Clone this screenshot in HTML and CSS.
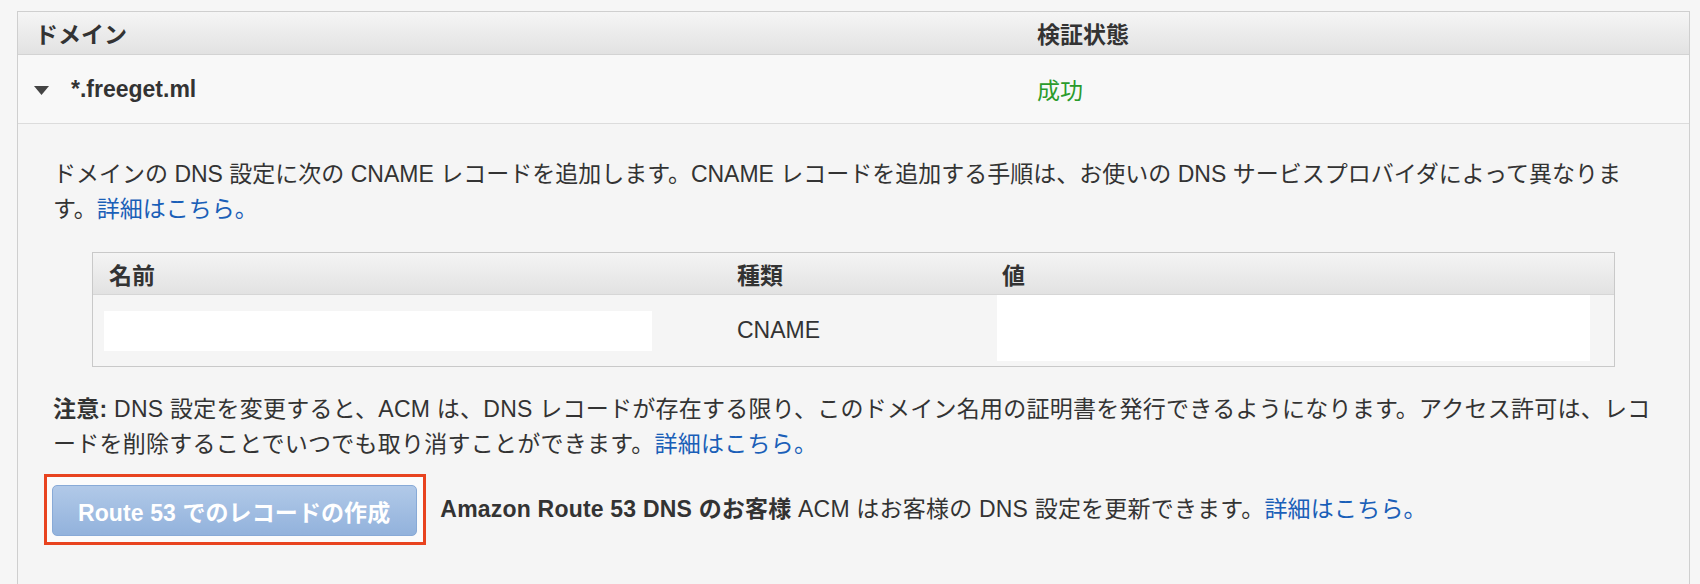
FILE: index.html
```html
<!DOCTYPE html>
<html lang="ja">
<head>
<meta charset="utf-8">
<title>ACM ドメイン検証</title>
<link rel="stylesheet" href="styles.css">
</head>
<body>
<div class="domains">
  <div class="head">
    <div class="cell">ドメイン</div>
    <div class="cell">検証状態</div>
  </div>
  <div class="row">
    <div class="cell domain">
      <svg class="caret" width="15" height="9" viewBox="0 0 15 9"><path d="M0 0H15L7.5 9Z" fill="#444"/></svg>
      <span>*.freeget.ml</span>
    </div>
    <div class="cell status">成功</div>
  </div>
  <div class="detail">
    <p class="para">ドメインの DNS 設定に次の CNAME レコードを追加します。CNAME レコードを追加する手順は、お使いの DNS サービスプロバイダによって異なります。<a class="link" href="#">詳細はこちら。</a></p>
    <div class="records">
      <div class="rhead">
        <div class="rcell">名前</div>
        <div class="rcell">種類</div>
        <div class="rcell">値</div>
      </div>
      <div class="rrow">
        <div class="rcell"><div class="mask mask-name"></div></div>
        <div class="rcell">CNAME</div>
        <div class="rcell top"><div class="mask mask-value"></div></div>
      </div>
    </div>
    <p class="para note"><strong>注意:</strong> DNS 設定を変更すると、ACM は、DNS レコードが存在する限り、このドメイン名用の証明書を発行できるようになります。アクセス許可は、レコードを削除することでいつでも取り消すことができます。<a class="link" href="#">詳細はこちら。</a></p>
    <div class="actions">
      <div class="highlight"><button class="btn" type="button">Route 53 でのレコードの作成</button></div>
      <p class="para action-text"><strong>Amazon Route 53 DNS のお客様</strong> ACM はお客様の DNS 設定を更新できます。<a class="link" href="#">詳細はこちら。</a></p>
    </div>
  </div>
</div>
</body>
</html>
```

FILE: styles.css
```css
html, body {
  margin: 0;
  height: 584px;
  overflow: hidden;
}
body {
  background: #f6f6f6;
  padding: 11px 0 0 17px;
  font-family: "Liberation Sans", "Noto Sans CJK JP", sans-serif;
  font-size: 23px;
  color: #333;
  box-sizing: border-box;
}
.domains {
  width: 1673px;
  box-sizing: border-box;
  border: 1px solid #cfcfcf;
  border-bottom: none;
  background: #f7f7f7;
  min-height: 700px;
}
.head, .row {
  display: grid;
  grid-template-columns: 1000px 1fr;
}
.head {
  height: 42px;
  border-bottom: 1px solid #d3d3d3;
  background: linear-gradient(#f5f5f5, #e2e2e2);
  font-weight: bold;
  color: #333;
}
.cell {
  display: flex;
  align-items: center;
  padding-left: 19px;
}
.head .cell:first-child {
  padding-left: 17px;
}
.row {
  height: 68px;
  border-bottom: 1px solid #dcdcdc;
  background: #f8f8f8;
}
.domain {
  padding-left: 16px;
  font-weight: bold;
  gap: 22px;
}
.caret {
  display: block;
  margin-top: 2px;
}
.status {
  color: #2b9b2b;
}
.detail {
  background: #f5f5f5;
  padding: 33px 35px 60px 35px;
}
.para {
  margin: 0;
  line-height: 35px;
}
.link {
  color: #1a5fb8;
  text-decoration: none;
}
.records {
  margin: 25px 39px 0 39px;
  border: 1px solid #c9c9c9;
}
.rhead, .rrow {
  display: grid;
  grid-template-columns: 626px 265px 1fr;
}
.rhead {
  height: 41px;
  border-bottom: 1px solid #d6d6d6;
  background: linear-gradient(#f4f4f4, #e2e2e2);
  font-weight: bold;
}
.rcell {
  display: flex;
  align-items: center;
  padding-left: 18px;
}
.rhead .rcell:first-child {
  padding-left: 16px;
}
.rrow {
  height: 71px;
  background: #f5f5f5;
}
.rrow .rcell:first-child {
  padding-left: 11px;
}
.rrow .rcell.top {
  align-items: flex-start;
  padding-left: 13px;
}
.mask {
  background: #fff;
}
.mask-name {
  width: 548px;
  height: 40px;
}
.mask-value {
  width: 593px;
  height: 66px;
}
.note {
  margin-top: 25px;
  letter-spacing: 0.25px;
  line-break: loose;
}
.actions {
  display: flex;
  align-items: center;
  margin-top: 12px;
  margin-left: -9px;
}
.highlight {
  border: 3px solid #e8431f;
  padding: 8px 6px 6px 5px;
  background: #fbfbfb;
}
.btn {
  display: block;
  height: 51px;
  padding: 0 26px 0 25px;
  border: 1px solid #88aad7;
  border-radius: 5px;
  background: linear-gradient(#b1c9e8, #92b2dc);
  color: #fff;
  font-family: inherit;
  font-size: 23px;
  font-weight: bold;
  letter-spacing: 0.1px;
}
.action-text {
  margin-left: 14px;
  letter-spacing: 0.2px;
}
```
